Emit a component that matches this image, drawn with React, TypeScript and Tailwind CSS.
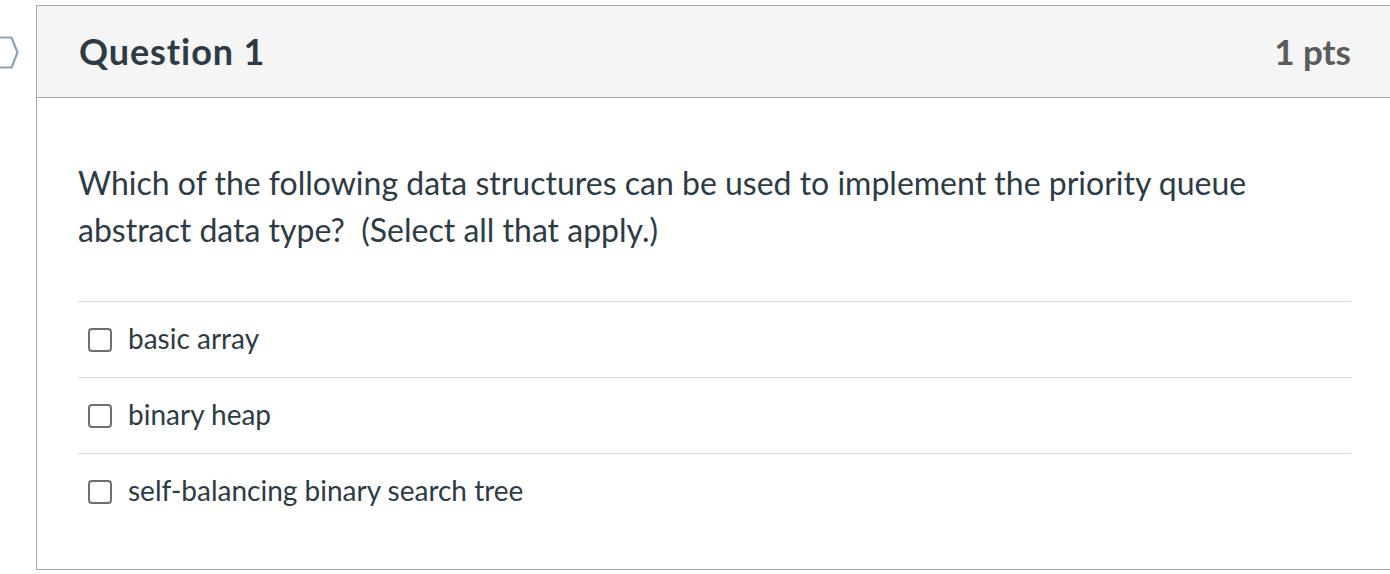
import React from 'react';

const answers = ['basic array', 'binary heap', 'self-balancing binary search tree'];

function FlagIcon() {
  return (
    <svg width="20" height="34" viewBox="0 0 20 34" className="mt-[31px] shrink-0" fill="none">
      <path d="M-4 1.5 H11.5 L17.5 16.5 L11.5 31.5 H-4" stroke="#8ea3b8" strokeWidth="2.2" strokeLinejoin="round" />
    </svg>
  );
}

export default function App() {
  return (
    <div
      className="w-[1390px] h-[574px] overflow-hidden bg-white pt-[5px] flex"
      style={{ fontFamily: 'Lato, "Open Sans", sans-serif' }}
    >
      <div className="w-[36px] shrink-0">
        <FlagIcon />
      </div>

      {/* Question card */}
      <div className="w-[1357px] shrink-0 border border-[#a8a8a8] h-[565px]">
        <div className="h-[92px] bg-[#f5f5f5] border-b border-[#a8a8a8] flex items-center justify-between pl-[42px] pr-[41px]">
          <h2 className="text-[36px] font-bold text-[#2d3b45] leading-none tracking-[0.9px] pb-[1px]">Question 1</h2>
          <span className="text-[35px] font-bold text-[#5b5b5b] leading-none">1 pts</span>
        </div>

        <div className="pl-[41px] pr-[41px] pt-[61px]">
          <p className="text-[32px] leading-[47px] text-[#2d3b45]">
            Which of the following data structures can be used to implement the priority queue
            <br />
            abstract data type?&nbsp; (Select all that apply.)
          </p>

          <div className="mt-[48px]">
            {answers.map((a) => (
              <label
                key={a}
                className="h-[76px] border-t-[1.5px] border-[#dcdcdc] flex items-center gap-[16px] pl-[10px]"
              >
                <span className="w-[24px] h-[24px] rounded-[4px] border-2 border-[#6f6f6f] bg-white shrink-0" />
                <span className="text-[28px] text-[#2d3b45] leading-none pb-[3px]">{a}</span>
              </label>
            ))}
          </div>
        </div>
      </div>
    </div>
  );
}
